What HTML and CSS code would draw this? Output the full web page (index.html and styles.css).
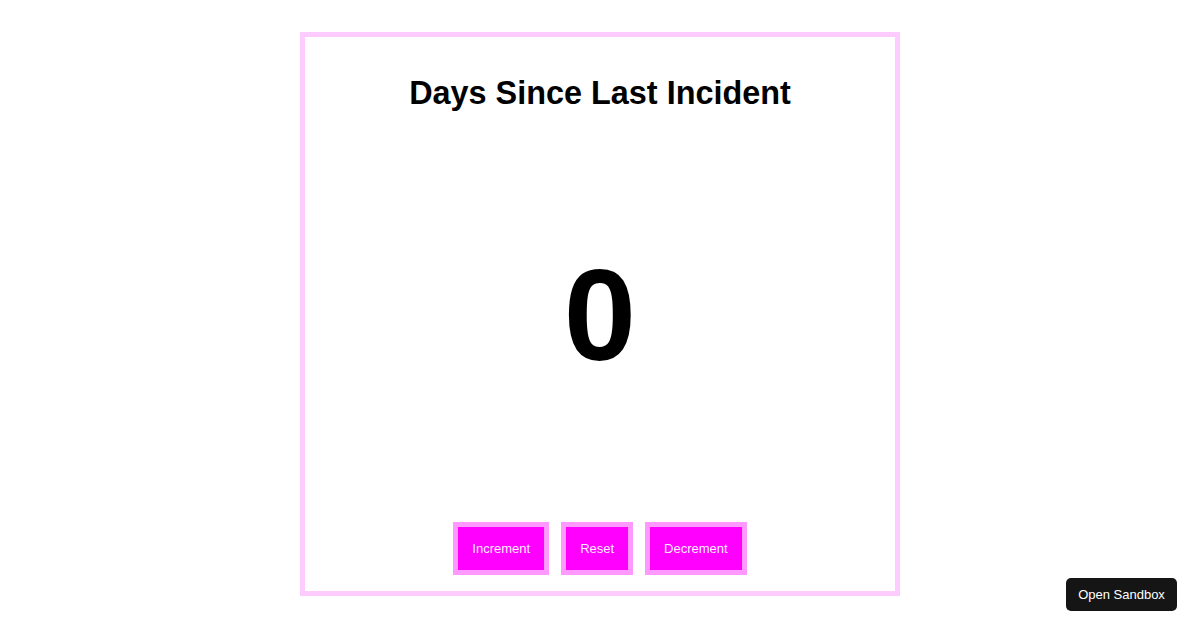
FILE: index.html
```html
<!DOCTYPE html>
<html>
<head>
<meta charset="utf-8">
<link rel="stylesheet" href="styles.css">
</head>
<body>
<div class="page">
  <div class="card">
    <h1 class="title">Days Since Last Incident</h1>
    <div class="count">0</div>
    <div class="actions">
      <button class="btn">Increment</button>
      <button class="btn">Reset</button>
      <button class="btn">Decrement</button>
    </div>
  </div>
</div>
<button class="sandbox">Open Sandbox</button>
</body>
</html>
```
FILE: styles.css
```css
html, body { margin: 0; padding: 0; background: #fff; }
body { font-family: "Liberation Sans", Arial, sans-serif; width: 1200px; height: 630px; overflow: hidden; position: relative; }
.page { display: flex; justify-content: center; padding-top: 32px; }
.card {
  box-sizing: border-box;
  width: 600px;
  height: 564px;
  border: 5px solid #fdcbfd;
  padding: 16px 16px 16px;
  display: flex;
  flex-direction: column;
  align-items: center;
}
.title { font-size: 32.4px; font-weight: bold; margin: 21.5px 0 0; line-height: 37px; color: #000; }
.count { font-size: 130px; font-weight: bold; line-height: 150px; margin-top: 128px; color: #000; }
.actions { margin-top: auto; display: flex; gap: 12px; }
.btn {
  font-family: "Liberation Sans", Arial, sans-serif;
  font-size: 13px;
  line-height: 15px;
  color: #ffeeff;
  background: #ff00ff;
  border: 5px solid #ff99ff;
  padding: 14px 14px 14px;
  margin: 0;
}
.sandbox {
  position: absolute;
  left: 1066px;
  top: 578px;
  width: 111px;
  height: 33px;
  background: #151515;
  color: #fff;
  border: none;
  border-radius: 5px;
  font-family: "Liberation Sans", Arial, sans-serif;
  font-size: 13px;
  padding: 0;
}
```
